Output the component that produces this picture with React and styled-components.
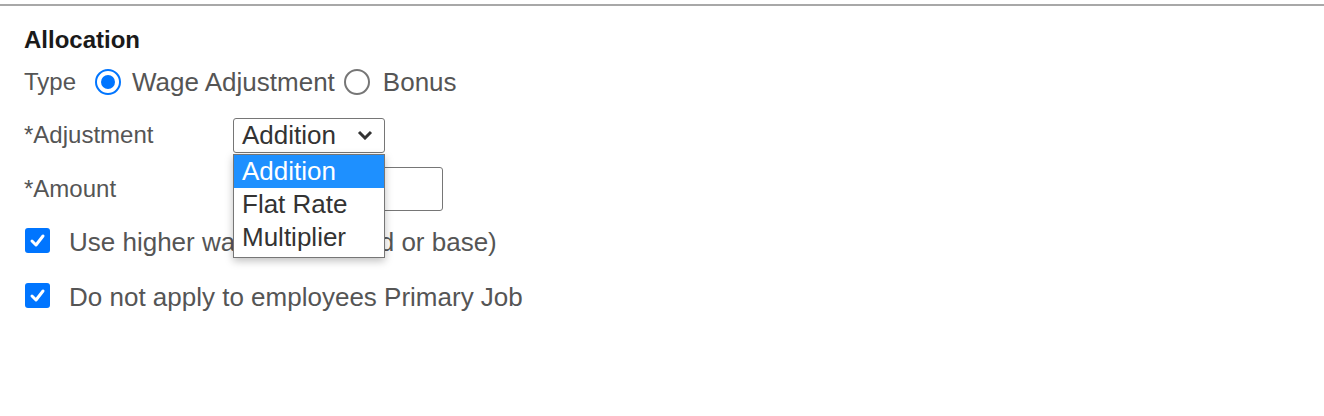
import React from "react";
import styled, { createGlobalStyle } from "styled-components";

const GlobalStyle = createGlobalStyle`
  html, body {
    margin: 0;
    padding: 0;
    background: #ffffff;
  }
  body {
    font-family: "Liberation Sans", Arial, sans-serif;
  }
`;

const Page = styled.div`
  width: 1324px;
  height: 416px;
  background: #fff;
  overflow: hidden;
`;

const Divider = styled.div`
  height: 2px;
  margin-top: 4px;
  background: #a8a8a8;
`;

const Section = styled.div`
  padding: 20px 24px 0 24px;
  display: flex;
  flex-direction: column;
  color: #555;
  font-size: 24px;
`;

const Heading = styled.div`
  font-weight: bold;
  font-size: 24px;
  color: #1a1a1a;
  line-height: 28px;
  margin-bottom: 6px;
`;

const Row = styled.div`
  display: flex;
  align-items: center;
  height: ${(p) => p.h || 54}px;
`;

const Label = styled.div`
  width: ${(p) => (p.w ? `${p.w}px` : "auto")};
  flex-shrink: 0;
  font-size: 24px;
`;

const ChoiceText = styled.span`
  font-size: 26px;
  color: #555;
  margin-top: ${(p) => p.drop || 0}px;
`;

const Radio = styled.span`
  width: 26px;
  height: 26px;
  box-sizing: border-box;
  border-radius: 50%;
  border: 2px solid ${(p) => (p.checked ? "#0075ff" : "#767676")};
  display: inline-flex;
  align-items: center;
  justify-content: center;
  margin: 0 ${(p) => p.mr}px 0 ${(p) => p.ml}px;
  flex-shrink: 0;
  &::after {
    content: "";
    display: ${(p) => (p.checked ? "block" : "none")};
    width: 14px;
    height: 14px;
    border-radius: 50%;
    background: #0075ff;
  }
`;

const SelectWrap = styled.div`
  position: relative;
`;

const SelectBox = styled.div`
  width: 152px;
  height: 35px;
  box-sizing: border-box;
  border: 1px solid #767676;
  border-radius: 3px;
  display: flex;
  align-items: center;
  justify-content: space-between;
  padding: 0 11px 0 8px;
  color: #333;
  font-size: 26px;
`;

const Chevron = styled.svg`
  width: 16px;
  height: 10px;
`;

const Dropdown = styled.div`
  position: absolute;
  left: 0;
  top: 36px;
  width: 152px;
  box-sizing: border-box;
  border: 1px solid #767676;
  background: #fff;
  box-shadow: 0 3px 8px rgba(0, 0, 0, 0.25);
  padding: 0 0 3px 0;
  z-index: 5;
`;

const Option = styled.div`
  height: 33px;
  line-height: 33px;
  padding-left: 8px;
  font-size: 26px;
  color: ${(p) => (p.active ? "#fff" : "#333")};
  background: ${(p) => (p.active ? "#1e90ff" : "transparent")};
`;

const TextInput = styled.div`
  width: 210px;
  height: 44px;
  box-sizing: border-box;
  border: 1px solid #767676;
  border-radius: 3px;
`;

const Check = styled.span`
  width: 25px;
  height: 25px;
  border-radius: 3px;
  background: #0075ff;
  display: inline-flex;
  align-items: center;
  justify-content: center;
  margin: 0 19px 0 1px;
  flex-shrink: 0;
`;

const CheckMark = () => (
  <svg width="17" height="17" viewBox="0 0 17 17">
    <path d="M3 9 L7 13 L14 4" fill="none" stroke="#fff" strokeWidth="3" strokeLinecap="round" strokeLinejoin="round" />
  </svg>
);

const options = ["Addition", "Flat Rate", "Multiplier"];

export default function App() {
  return (
    <Page>
      <GlobalStyle />
      <Divider />
      <Section>
        <Heading>Allocation</Heading>
        <Row h={44}>
          <Label>Type</Label>
          <Radio checked ml={19} mr={11} />
          <ChoiceText>Wage Adjustment</ChoiceText>
          <Radio ml={9} mr={13} />
          <ChoiceText>Bonus</ChoiceText>
        </Row>
        <Row h={62}>
          <Label w={209}>*Adjustment</Label>
          <SelectWrap>
            <SelectBox>
              <span>Addition</span>
              <Chevron viewBox="0 0 16 10">
                <path d="M2 2 L8 8 L14 2" fill="none" stroke="#333" strokeWidth="3" />
              </Chevron>
            </SelectBox>
            <Dropdown>
              {options.map((o, i) => (
                <Option key={o} active={i === 0}>{o}</Option>
              ))}
            </Dropdown>
          </SelectWrap>
        </Row>
        <Row h={46}>
          <Label w={209}>*Amount</Label>
          <TextInput />
        </Row>
        <Row h={56}>
          <Check><CheckMark /></Check>
          <ChoiceText drop={4}>Use higher wage (computed or base)</ChoiceText>
        </Row>
        <Row h={54}>
          <Check><CheckMark /></Check>
          <ChoiceText drop={4}>Do not apply to employees Primary Job</ChoiceText>
        </Row>
      </Section>
    </Page>
  );
}
